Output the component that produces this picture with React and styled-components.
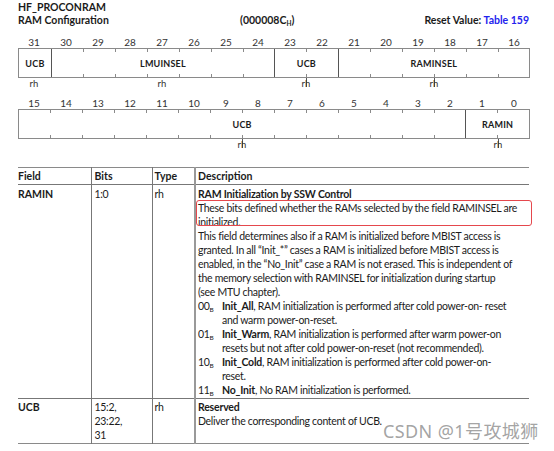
import React from "react";
import styled, { createGlobalStyle } from "styled-components";

const Global = createGlobalStyle`
  html, body { margin: 0; padding: 0; background: #fff; }
  body { font-family: Lato, "Noto Sans", "Noto Sans CJK SC", sans-serif; color: #1b1b1b; }
`;

const Page = styled.div`
  position: relative;
  width: 554px;
  height: 451px;
  overflow: hidden;
  padding-left: 18px;
  padding-top: 1px;
  box-sizing: border-box;
`;

const Title = styled.div`
  font-size: 10.5px;
  font-weight: 700;
  line-height: 13px;
  width: 512px;
`;

const TitleRow = styled.div`
  display: grid;
  grid-template-columns: 222px 1fr auto;
  font-size: 10.5px;
  font-weight: 700;
  line-height: 13px;
  width: 511px;
`;

const Link = styled.span`
  color: #2323ee;
`;

const Reg = styled.div`
  width: 512px;
  margin-top: ${(p) => p.$top}px;
`;

const Nums = styled.div`
  display: grid;
  grid-template-columns: repeat(16, 1fr);
  font-size: 10px;
  line-height: 12px;
  color: #333;
  text-align: center;
`;

const Box = styled.div`
  display: grid;
  grid-template-columns: repeat(16, 1fr);
  height: 30px;
  box-sizing: border-box;
  border: 1px solid #8a8a8a;
`;

const Field = styled.div`
  grid-column: span ${(p) => p.$span};
  display: flex;
  align-items: center;
  justify-content: center;
  font-size: 9px;
  font-weight: 700;
  letter-spacing: 0.2px;
  border-left: ${(p) => (p.$first ? "none" : "1px solid #555")};
  background-image: repeating-linear-gradient(to right, transparent 0 31px, #8a8a8a 31px 32px),
    repeating-linear-gradient(to right, transparent 0 31px, #8a8a8a 31px 32px);
  background-size: calc(100% - 2px) 3px, calc(100% - 2px) 3px;
  background-position: left top, left bottom;
  background-repeat: no-repeat;
`;

const Access = styled.div`
  display: grid;
  grid-template-columns: repeat(16, 1fr);
  font-size: 9.5px;
  line-height: 12px;
  color: #333;
`;

const Rh = styled.div`
  grid-column: span ${(p) => p.$span};
  text-align: center;
  background: ${(p) =>
    p.$line ? "linear-gradient(#555, #555) center top / 1px 9px no-repeat" : "none"};
`;

const Table = styled.table`
  margin-top: 16px;
  width: 511px;
  border-collapse: collapse;
  table-layout: fixed;
  font-size: 10.5px;
  line-height: 14px;
  letter-spacing: -0.3px;
  border-top: 1.5px solid #8a8a8a;
  border-bottom: 1px solid #8a8a8a;
`;

const Th = styled.th`
  text-align: left;
  font-weight: 700;
  letter-spacing: 0;
  padding: 1px 0 1px ${(p) => p.$pad}px;
  height: 14px;
  border-bottom: 1px solid #777;
  border-left: ${(p) => p.$border || "none"};
`;

const Td = styled.td`
  vertical-align: top;
  padding: ${(p) => (p.$sep ? "2px" : "1px")} 0 1px ${(p) => p.$pad}px;
  border-left: ${(p) => p.$border || "none"};
  border-bottom: ${(p) => (p.$sep ? "1px solid #777" : "none")};
  font-weight: ${(p) => (p.$bold ? 700 : 400)};
  letter-spacing: ${(p) => (p.$bold ? "0" : "-0.3px")};
  white-space: nowrap;
`;

const B = styled.b`
  font-weight: 700;
  letter-spacing: -0.2px;
`;

const Marked = styled.div`
  position: relative;
  &::after {
    content: "";
    position: absolute;
    left: -2px;
    right: -3px;
    top: -1px;
    bottom: 3px;
    border: 1.5px solid #e5484d;
    border-radius: 3px;
  }
`;

const Item = styled.div`
  display: grid;
  grid-template-columns: 24px 1fr;
`;

const Sub = styled.sub`
  font-size: 6.5px;
  vertical-align: -2px;
  line-height: 0;
`;

const Watermark = styled.div`
  position: absolute;
  left: 383px;
  top: 419px;
  font-family: "Noto Sans", "Noto Sans CJK SC", sans-serif;
  font-size: 18px;
  line-height: 24px;
  color: rgba(140, 140, 140, 0.8);
  white-space: nowrap;
  letter-spacing: 0.4px;
`;

const row1 = [
  { name: "UCB", span: 1 },
  { name: "LMUINSEL", span: 7 },
  { name: "UCB", span: 2 },
  { name: "RAMINSEL", span: 6 },
];
const row2 = [
  { name: "UCB", span: 14 },
  { name: "RAMIN", span: 2 },
];

function Register({ hi, fields, top }) {
  const nums = Array.from({ length: 16 }, (_, i) => hi - i);
  return (
    <Reg $top={top}>
      <Nums>
        {nums.map((n) => (
          <div key={n}>{n}</div>
        ))}
      </Nums>
      <Box>
        {fields.map((f, i) => (
          <Field key={i} $span={f.span} $first={i === 0}>
            {f.name}
          </Field>
        ))}
      </Box>
      <Access>
        {fields.map((f, i) => (
          <Rh key={i} $span={f.span} $line={f.span % 2 === 0}>
            rh
          </Rh>
        ))}
      </Access>
    </Reg>
  );
}

const Code = ({ v }) => (
  <span>
    {v}
    <Sub>B</Sub>
  </span>
);

export default function App() {
  return (
    <>
      <Global />
      <Page>
        <Title>HF_PROCONRAM</Title>
        <TitleRow>
          <span>RAM Configuration</span>
          <span>
            (000008C<Sub>H</Sub>)
          </span>
          <span>
            Reset Value: <Link>Table 159</Link>
          </span>
        </TitleRow>
        <Register hi={31} fields={row1} top={9} />
        <Register hi={15} fields={row2} top={7} />
        <Table>
          <colgroup>
            <col style={{ width: 73 }} />
            <col style={{ width: 61 }} />
            <col style={{ width: 43 }} />
            <col />
          </colgroup>
          <thead>
            <tr>
              <Th $pad={0}>Field</Th>
              <Th $pad={3} $border="1px solid #777">Bits</Th>
              <Th $pad={2} $border="1px solid #777">Type</Th>
              <Th $pad={2} $border="2px solid #999">Description</Th>
            </tr>
          </thead>
          <tbody>
            <tr>
              <Td $pad={0} $bold $sep>RAMIN</Td>
              <Td $pad={3} $border="1px solid #777" $sep>1:0</Td>
              <Td $pad={2} $border="1px solid #777" $sep>rh</Td>
              <Td $pad={2} $border="2px solid #999" $sep>
                <B>RAM Initialization by SSW Control</B>
                <Marked>
                  These bits defined whether the RAMs selected by the field RAMINSEL are
                  <br />
                  initialized.
                </Marked>
                <div>
                  This field determines also if a RAM is initialized before MBIST access is
                  <br />
                  granted. In all “Init_*” cases a RAM is initialized before MBIST access is
                  <br />
                  enabled, in the “No_Init” case a RAM is not erased. This is independent of
                  <br />
                  the memory selection with RAMINSEL for initialization during startup
                  <br />
                  (see MTU chapter).
                </div>
                <Item>
                  <Code v="00" />
                  <span>
                    <B>Init_All</B>, RAM initialization is performed after cold power-on- reset
                    <br />
                    and warm power-on-reset.
                  </span>
                </Item>
                <Item>
                  <Code v="01" />
                  <span>
                    <B>Init_Warm</B>, RAM initialization is performed after warm power-on
                    <br />
                    resets but not after cold power-on-reset (not recommended).
                  </span>
                </Item>
                <Item>
                  <Code v="10" />
                  <span>
                    <B>Init_Cold</B>, RAM initialization is performed after cold power-on-
                    <br />
                    reset.
                  </span>
                </Item>
                <Item>
                  <Code v="11" />
                  <span>
                    <B>No_Init</B>, No RAM initialization is performed.
                  </span>
                </Item>
              </Td>
            </tr>
            <tr>
              <Td $pad={0} $bold>UCB</Td>
              <Td $pad={3} $border="1px solid #777">
                15:2,
                <br />
                23:22,
                <br />
                31
              </Td>
              <Td $pad={2} $border="1px solid #777">rh</Td>
              <Td $pad={2} $border="2px solid #999">
                <B>Reserved</B>
                <br />
                Deliver the corresponding content of UCB.
              </Td>
            </tr>
          </tbody>
        </Table>
        <Watermark>CSDN @1号攻城狮</Watermark>
      </Page>
    </>
  );
}
